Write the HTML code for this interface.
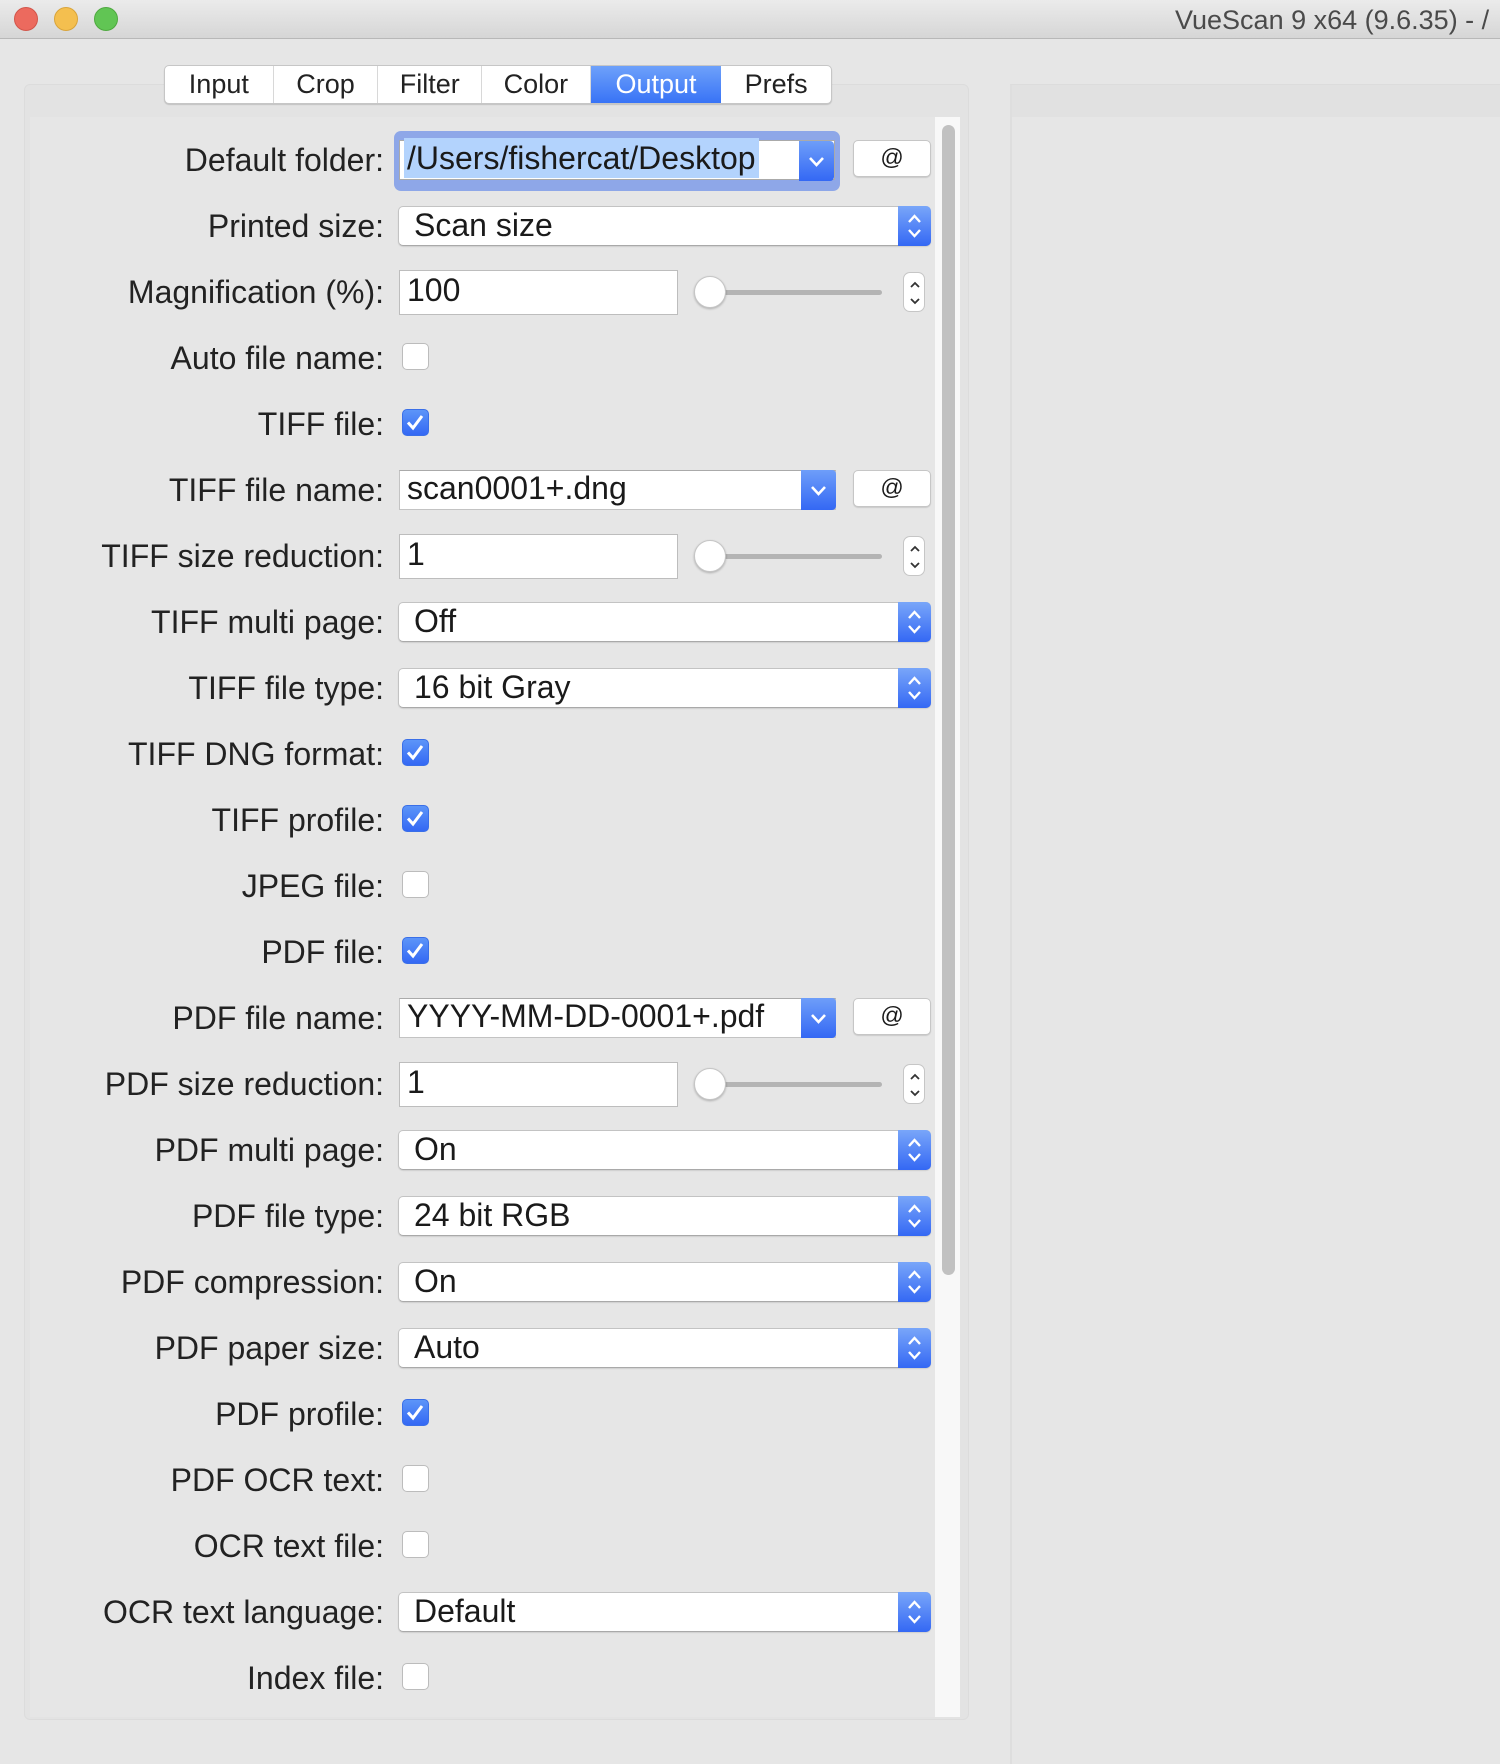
<!DOCTYPE html>
<html><head><meta charset="utf-8">
<style>
*{box-sizing:border-box;margin:0;padding:0}
body{width:1500px;height:1746px;background:#e6e6e6;font-family:"Liberation Sans",Arial,sans-serif;position:relative;overflow:hidden;color:#1a1a1a}
.tb{position:absolute;left:0;top:0;width:1500px;height:39px;background:linear-gradient(#ebebeb,#d6d6d6);border-bottom:1px solid #b8b8b8}
.dot{position:absolute;top:7px;width:24px;height:24px;border-radius:50%}
.title{position:absolute;left:1175px;top:5px;font-size:27px;color:#4a4a4a;white-space:nowrap}
.panel{position:absolute;left:24px;top:84px;width:945px;height:1636px;background:#e3e3e3;border:1px solid #dcdcdc;border-radius:6px}
.inner{position:absolute;left:30px;top:117px;width:905px;height:1600px;background:#e6e6e6}
.track{position:absolute;left:935px;top:117px;width:25px;height:1600px;background:#f8f8f8}
.thumb{position:absolute;left:942px;top:125px;width:13px;height:1150px;background:#c1c1c1;border-radius:7px}
.rpanel{position:absolute;left:1010px;top:84px;width:500px;height:1680px;background:#e6e6e6;border-left:2px solid #dedede;border-top:1px solid #dcdcdc}
.rtop{position:absolute;left:1012px;top:85px;width:500px;height:32px;background:#e1e1e1}
.tabs{position:absolute;left:164px;top:65px;height:39px;width:668px;background:#fff;border:1px solid #c6c6c6;border-radius:5px;display:flex;box-shadow:0 1px 1px rgba(0,0,0,.15);overflow:hidden}
.tab{height:100%;font-size:27px;line-height:37px;text-align:center;border-right:1px solid #d8d8d8;color:#222}
.tab.sel{background:linear-gradient(#6ea1fa,#3873f6);color:#fff;border-right:none}
.lbl{position:absolute;right:1116px;height:44px;line-height:44px;font-size:32px;white-space:nowrap;color:#222}
.pop{position:absolute;left:398px;width:533px;height:40px;background:#fff;border:1px solid #c3c3c3;border-bottom-color:#a9a9a9;border-radius:5px;box-shadow:0 1px 1px rgba(0,0,0,.1)}
.pop span{position:absolute;left:15px;top:-2px;font-size:32px;line-height:40px}
.pop .b{position:absolute;right:-1px;top:-1px;width:33px;height:40px;background:linear-gradient(#79a6f9,#3468f4);border-radius:0 5px 5px 0}
.combo{position:absolute;left:399px;width:437px;height:40px;background:#fff;border:1px solid #c3c3c3;border-top-color:#aaa}
.combo span{position:absolute;left:7px;top:-3px;font-size:32px;line-height:40px;white-space:nowrap}
.combo .b{position:absolute;right:-1px;top:-1px;width:35px;height:40px;background:linear-gradient(#6e9ef9,#3468f4);border-radius:0 4px 4px 0}
.at{position:absolute;left:853px;width:78px;height:37px;background:#fff;border:1px solid #c6c6c6;border-radius:5px;font-size:23px;text-align:center;line-height:33px;box-shadow:0 1px 1px rgba(0,0,0,.12)}
.tf{position:absolute;left:399px;width:279px;height:45px;background:#fff;border:1px solid #bdbdbd}
.tf span{position:absolute;left:7px;top:0;font-size:32px;line-height:38px}
.sl{position:absolute;left:695px;width:187px;height:5px;background:#b4b4b4;border-radius:3px}
.kn{position:absolute;left:694px;width:32px;height:32px;background:#fff;border:1px solid #c6c6c6;border-radius:50%;box-shadow:0 1px 2px rgba(0,0,0,.25)}
.st{position:absolute;left:903px;width:22px;height:40px;background:#fff;border:1px solid #c6c6c6;border-radius:7px}
.cb{position:absolute;left:402px;width:27px;height:27px;background:#fff;border:1px solid #bcbcbc;border-radius:5px}
.cb.on{background:linear-gradient(#5c95f8,#3468f4);border-color:#3a6fe8}
</style></head><body>
<div class="tb">
<div class="dot" style="left:14px;background:#ec6a5e;border:1px solid #d2554a"></div>
<div class="dot" style="left:54px;background:#f4bf4f;border:1px solid #d9a43a"></div>
<div class="dot" style="left:94px;background:#61c554;border:1px solid #4ea93f"></div>
<div class="title">VueScan 9 x64 (9.6.35) - /</div>
</div>
<div class="panel"></div>
<div class="inner"></div>
<div class="track"></div>
<div class="thumb"></div>
<div class="rpanel"></div>
<div class="rtop"></div>
<div class="tabs">
<div class="tab" style="width:109px">Input</div>
<div class="tab" style="width:105px">Crop</div>
<div class="tab" style="width:104px">Filter</div>
<div class="tab" style="width:109px">Color</div>
<div class="tab sel" style="width:131px">Output</div>
<div class="tab" style="width:110px;border-right:none">Prefs</div>
</div>

<svg width="0" height="0" style="position:absolute"><defs>
<symbol id="ud" viewBox="0 0 33 40"><path d="M11 16l5.5-6 5.5 6M11 24l5.5 6 5.5-6" fill="none" stroke="#fff" stroke-width="2.4"/></symbol>
<symbol id="dn" viewBox="0 0 35 40"><path d="M11 17l6.5 7 6.5-7" fill="none" stroke="#fff" stroke-width="2.6"/></symbol>
<symbol id="ck" viewBox="0 0 27 27"><path d="M6 13.5l5 5.5 9-12" fill="none" stroke="#fff" stroke-width="3"/></symbol>
<symbol id="sud" viewBox="0 0 22 40"><path d="M7 14l4-4 4 4M7 26l4 4 4-4" fill="none" stroke="#333" stroke-width="1.8"/></symbol>
</defs></svg>

<div class="lbl" style="top:138px">Default folder:</div>
<div style="position:absolute;left:394px;top:131px;width:446px;height:60px;background:#8ea7e8;border-radius:7px"></div>
<div class="combo" style="top:140px;width:436px;border-color:#aaa"><span style="background:#b3d3fd;left:4px;padding:0 3px">/Users/fishercat/Desktop</span><div class="b" style="top:0;right:0"><svg width="35" height="40"><use href="#dn"/></svg></div></div>
<div class="at" style="top:140px">@</div>
<div class="lbl" style="top:204px">Printed size:</div>
<div class="pop" style="top:206px"><span>Scan size</span><div class="b"><svg width="33" height="40"><use href="#ud"/></svg></div></div>
<div class="lbl" style="top:270px">Magnification (%):</div>
<div class="tf" style="top:270px"><span>100</span></div>
<div class="sl" style="top:290px"></div><div class="kn" style="top:276px"></div>
<div class="st" style="top:272px"><svg width="22" height="40"><use href="#sud"/></svg></div>
<div class="lbl" style="top:336px">Auto file name:</div>
<div class="cb" style="top:343px"></div>
<div class="lbl" style="top:402px">TIFF file:</div>
<div class="cb on" style="top:409px"><svg width="27" height="27" style="margin:-1px"><use href="#ck"/></svg></div>
<div class="lbl" style="top:468px">TIFF file name:</div>
<div class="combo" style="top:470px"><span>scan0001+.dng</span><div class="b"><svg width="35" height="40"><use href="#dn"/></svg></div></div>
<div class="at" style="top:470px">@</div>
<div class="lbl" style="top:534px">TIFF size reduction:</div>
<div class="tf" style="top:534px"><span>1</span></div>
<div class="sl" style="top:554px"></div><div class="kn" style="top:540px"></div>
<div class="st" style="top:536px"><svg width="22" height="40"><use href="#sud"/></svg></div>
<div class="lbl" style="top:600px">TIFF multi page:</div>
<div class="pop" style="top:602px"><span>Off</span><div class="b"><svg width="33" height="40"><use href="#ud"/></svg></div></div>
<div class="lbl" style="top:666px">TIFF file type:</div>
<div class="pop" style="top:668px"><span>16 bit Gray</span><div class="b"><svg width="33" height="40"><use href="#ud"/></svg></div></div>
<div class="lbl" style="top:732px">TIFF DNG format:</div>
<div class="cb on" style="top:739px"><svg width="27" height="27" style="margin:-1px"><use href="#ck"/></svg></div>
<div class="lbl" style="top:798px">TIFF profile:</div>
<div class="cb on" style="top:805px"><svg width="27" height="27" style="margin:-1px"><use href="#ck"/></svg></div>
<div class="lbl" style="top:864px">JPEG file:</div>
<div class="cb" style="top:871px"></div>
<div class="lbl" style="top:930px">PDF file:</div>
<div class="cb on" style="top:937px"><svg width="27" height="27" style="margin:-1px"><use href="#ck"/></svg></div>
<div class="lbl" style="top:996px">PDF file name:</div>
<div class="combo" style="top:998px"><span>YYYY-MM-DD-0001+.pdf</span><div class="b"><svg width="35" height="40"><use href="#dn"/></svg></div></div>
<div class="at" style="top:998px">@</div>
<div class="lbl" style="top:1062px">PDF size reduction:</div>
<div class="tf" style="top:1062px"><span>1</span></div>
<div class="sl" style="top:1082px"></div><div class="kn" style="top:1068px"></div>
<div class="st" style="top:1064px"><svg width="22" height="40"><use href="#sud"/></svg></div>
<div class="lbl" style="top:1128px">PDF multi page:</div>
<div class="pop" style="top:1130px"><span>On</span><div class="b"><svg width="33" height="40"><use href="#ud"/></svg></div></div>
<div class="lbl" style="top:1194px">PDF file type:</div>
<div class="pop" style="top:1196px"><span>24 bit RGB</span><div class="b"><svg width="33" height="40"><use href="#ud"/></svg></div></div>
<div class="lbl" style="top:1260px">PDF compression:</div>
<div class="pop" style="top:1262px"><span>On</span><div class="b"><svg width="33" height="40"><use href="#ud"/></svg></div></div>
<div class="lbl" style="top:1326px">PDF paper size:</div>
<div class="pop" style="top:1328px"><span>Auto</span><div class="b"><svg width="33" height="40"><use href="#ud"/></svg></div></div>
<div class="lbl" style="top:1392px">PDF profile:</div>
<div class="cb on" style="top:1399px"><svg width="27" height="27" style="margin:-1px"><use href="#ck"/></svg></div>
<div class="lbl" style="top:1458px">PDF OCR text:</div>
<div class="cb" style="top:1465px"></div>
<div class="lbl" style="top:1524px">OCR text file:</div>
<div class="cb" style="top:1531px"></div>
<div class="lbl" style="top:1590px">OCR text language:</div>
<div class="pop" style="top:1592px"><span>Default</span><div class="b"><svg width="33" height="40"><use href="#ud"/></svg></div></div>
<div class="lbl" style="top:1656px">Index file:</div>
<div class="cb" style="top:1663px"></div>
</body></html>
